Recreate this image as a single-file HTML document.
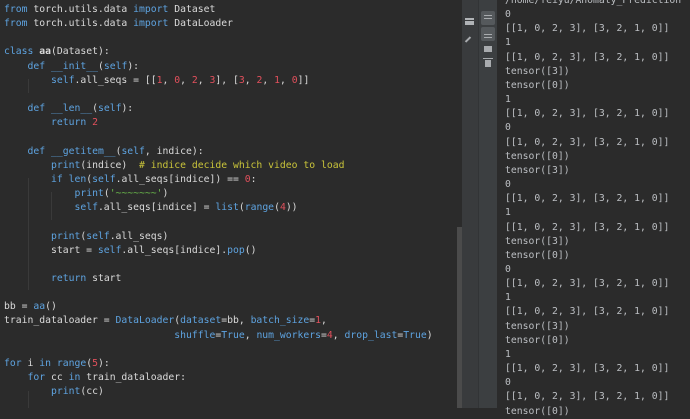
<!DOCTYPE html>
<html><head><meta charset="utf-8"><style>
html,body{margin:0;padding:0;width:690px;height:408px;overflow:hidden;background:#2b2b2b}
pre{margin:0;position:absolute;font-family:"DejaVu Sans Mono","Liberation Mono",monospace;font-size:9.75px;line-height:14.15px;white-space:pre}
#code{left:4px;top:3px;color:#dadada}
#con{left:505px;top:-6px;color:#bcbfc3}
.k{color:#5ea3e0}.n{color:#e2505c}.c{color:#c9c43a}.s{color:#6cbf4c}
#sb{position:absolute;left:457px;top:227px;width:5px;height:181px;background:#4b4b4b}
#s1{position:absolute;left:462px;top:0;width:16px;height:408px;background:#393b3d}
#ln{position:absolute;left:478px;top:0;width:1px;height:408px;background:#323436}
#s2{position:absolute;left:479px;top:0;width:18px;height:408px;background:#3c3f41}
.ic{position:absolute;background:#a8abae}
.guide{position:absolute;width:1px;background:#3a3a3a}
</style></head><body>
<div class="guide" style="left:28px;top:79px;height:14px"></div>
<div class="guide" style="left:28px;top:178px;height:112px"></div>
<div class="guide" style="left:51px;top:192px;height:28px"></div>
<div class="guide" style="left:28px;top:391px;height:17px"></div>
<pre id="code"><span class="k">from</span> torch.utils.data <span class="k">import</span> Dataset
<span class="k">from</span> torch.utils.data <span class="k">import</span> DataLoader

<span class="k">class</span> <b>aa</b>(Dataset):
    <span class="k">def</span> <span class="k">__init__</span>(<span class="k">self</span>):
        <span class="k">self</span>.all_seqs = [[<span class="n">1</span>, <span class="n">0</span>, <span class="n">2</span>, <span class="n">3</span>], [<span class="n">3</span>, <span class="n">2</span>, <span class="n">1</span>, <span class="n">0</span>]]

    <span class="k">def</span> <span class="k">__len__</span>(<span class="k">self</span>):
        <span class="k">return</span> <span class="n">2</span>

    <span class="k">def</span> <span class="k">__getitem__</span>(<span class="k">self</span>, indice):
        <span class="k">print</span>(indice)  <span class="c"># indice decide which video to load</span>
        <span class="k">if</span> <span class="k">len</span>(<span class="k">self</span>.all_seqs[indice]) == <span class="n">0</span>:
            <span class="k">print</span>(<span class="s">'~~~~~~~'</span>)
            <span class="k">self</span>.all_seqs[indice] = <span class="k">list</span>(<span class="k">range</span>(<span class="n">4</span>))

        <span class="k">print</span>(<span class="k">self</span>.all_seqs)
        start = <span class="k">self</span>.all_seqs[indice].<span class="k">pop</span>()

        <span class="k">return</span> start

bb = <span class="k">aa</span>()
train_dataloader = <span class="k">DataLoader</span>(<span class="k">dataset</span>=bb, <span class="k">batch_size</span>=<span class="n">1</span>,
                             <span class="k">shuffle</span>=<span class="k">True</span>, <span class="k">num_workers</span>=<span class="n">4</span>, <span class="k">drop_last</span>=<span class="k">True</span>)

<span class="k">for</span> i <span class="k">in</span> <span class="k">range</span>(<span class="n">5</span>):
    <span class="k">for</span> cc <span class="k">in</span> train_dataloader:
        <span class="k">print</span>(cc)</pre>
<div id="sb"></div>
<div id="s1"></div><div id="ln"></div><div id="s2"></div>
<div class="ic" style="left:465px;top:18px;width:9px;height:7px;background:#b0b3b6"></div>
<div class="ic" style="left:465px;top:20px;width:9px;height:1px;background:#393b3d"></div>
<div class="ic" style="left:467px;top:36px;width:2px;height:7px;transform:rotate(45deg)"></div>
<div style="position:absolute;left:481px;top:11px;width:14px;height:14px;background:#55595c;border-radius:2px"></div>
<div class="ic" style="left:484px;top:15px;width:8px;height:1px"></div>
<div class="ic" style="left:484px;top:18px;width:8px;height:1px"></div>
<div style="position:absolute;left:481px;top:27px;width:14px;height:14px;background:#55595c;border-radius:2px"></div>
<div class="ic" style="left:484px;top:34px;width:8px;height:1px"></div>
<div class="ic" style="left:484px;top:37px;width:8px;height:1px"></div>
<div class="ic" style="left:484px;top:46px;width:8px;height:6px"></div>
<div class="ic" style="left:485px;top:60px;width:6px;height:7px"></div>
<div class="ic" style="left:483px;top:58px;width:10px;height:1px"></div>
<pre id="con">/home/feiyu/Anomaly_Prediction
0
[[1, 0, 2, 3], [3, 2, 1, 0]]
1
[[1, 0, 2, 3], [3, 2, 1, 0]]
tensor([3])
tensor([0])
1
[[1, 0, 2, 3], [3, 2, 1, 0]]
0
[[1, 0, 2, 3], [3, 2, 1, 0]]
tensor([0])
tensor([3])
0
[[1, 0, 2, 3], [3, 2, 1, 0]]
1
[[1, 0, 2, 3], [3, 2, 1, 0]]
tensor([3])
tensor([0])
0
[[1, 0, 2, 3], [3, 2, 1, 0]]
1
[[1, 0, 2, 3], [3, 2, 1, 0]]
tensor([3])
tensor([0])
1
[[1, 0, 2, 3], [3, 2, 1, 0]]
0
[[1, 0, 2, 3], [3, 2, 1, 0]]
tensor([0])</pre>
</body></html>
